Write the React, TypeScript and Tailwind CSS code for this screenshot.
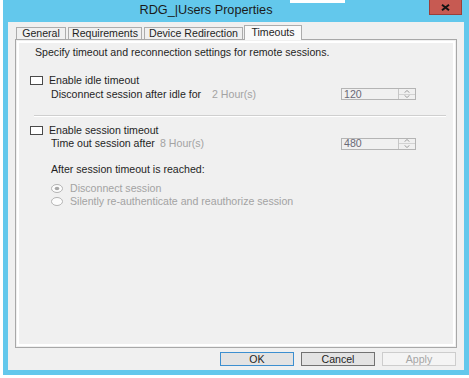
import React from 'react'

const font = { fontFamily: '"Liberation Sans", Arial, sans-serif' }

const Spin = ({ value }: { value: string }) => (
    <div className="flex h-[12px] w-[75px] border border-[#b4b4b4] bg-[#f0f0f0]">
        <div className="flex flex-1 items-center pl-[2px] text-[10.6px] leading-none text-[#6a6a76]">{value}</div>
        <div className="flex w-[17px] flex-col border-l border-[#c6c6c6]">
            <div className="flex flex-1 items-center justify-center border-b border-[#d2d2d2]">
                <svg width="6" height="3" viewBox="0 0 6 3"><path d="M0.5 2.7 L3 0.5 L5.5 2.7" fill="none" stroke="#a0a0a0" strokeWidth="1" /></svg>
            </div>
            <div className="flex flex-1 items-center justify-center">
                <svg width="6" height="3" viewBox="0 0 6 3"><path d="M0.5 0.3 L3 2.5 L5.5 0.3" fill="none" stroke="#a0a0a0" strokeWidth="1" /></svg>
            </div>
        </div>
    </div>
)

const Check = () => <div className="h-[9px] w-[13px] border border-[#4a4a4a] bg-white" />

const Radio = ({ on }: { on?: boolean }) => (
    <svg width="12" height="9" viewBox="0 0 12 9">
        <ellipse cx="6" cy="4.5" rx="5.5" ry="4" fill="#fcfcfc" stroke="#b3b3b3" strokeWidth="1" />
        {on && <ellipse cx="6" cy="4.5" rx="2.3" ry="1.7" fill="#a8a8a8" />}
    </svg>
)

const tabs = [
    { label: 'General', w: 'w-[50px]' },
    { label: 'Requirements', w: 'w-[74px]' },
    { label: 'Device Redirection', w: 'w-[99px]' },
]

const App = () => {
    return (
        <div className="relative h-[378px] w-[469px] overflow-hidden bg-white text-[#1f1f1f]" style={font}>
            <div className="ml-[3px] flex h-[375px] w-[466px] flex-col bg-[#63c8ec]">
                {/* title bar */}
                <div className="flex h-[22px] items-start">
                    <div className="flex h-[22px] flex-1 items-center justify-center pr-[20px] text-[12.7px] text-[#1b1b1b]">
                        RDG_|Users Properties
                    </div>
                    <div className="mr-[7px] flex h-[15px] w-[33px] items-center justify-center border border-t-0 border-[#9a3f3a] bg-[#c75a52]">
                        <svg width="9" height="7" viewBox="0 0 9 7">
                            <path d="M1 0.8 L8 6.2 M8 0.8 L1 6.2" stroke="#141414" strokeWidth="2" />
                        </svg>
                    </div>
                </div>

                {/* client */}
                <div className="mx-[5px] flex h-[348px] flex-col bg-[#f0f0f0] px-[7px] pt-[3px]">
                    <div className="relative z-10 flex h-[14px] items-end pl-[1px] text-[10.6px]">
                        {tabs.map((t) => (
                            <div
                                key={t.label}
                                className={`${t.w} mr-[2px] flex h-[12px] items-center justify-center border border-b-0 border-[#acacac] bg-[#f0f0f0] leading-none`}
                            >
                                {t.label}
                            </div>
                        ))}
                        <div className="-ml-[1px] -mb-px flex h-[15px] w-[58px] items-center justify-center border border-b-0 border-[#acacac] bg-[#fafafa] pb-[1px] leading-none">
                            Timeouts
                        </div>
                    </div>

                    <div className="h-[309px] border border-[#a8a8a8] bg-[#f0f0f0] pl-[14px] pr-[10px] text-[10.6px] leading-none shadow-[inset_0_0_0_1px_#f0f0f0,inset_0_0_0_3px_#ffffff]">
                        <div className="mt-[5px] flex h-[14px] items-center pl-[5px]">
                            Specify timeout and reconnection settings for remote sessions.
                        </div>

                        <div className="mt-[14px] flex h-[14px] items-center gap-[6px]">
                            <Check />
                            <span>Enable idle timeout</span>
                        </div>
                        <div className="flex h-[14px] items-center pl-[21px]">
                            <span className="w-[161px]">Disconnect session after idle for</span>
                            <span className="text-[#a3a3a3]">2 Hour(s)</span>
                            <div className="ml-auto mr-[30px]"><Spin value="120" /></div>
                        </div>

                        <div className="ml-[4px] mt-[14px] h-[2px] border-t border-[#cfcfcf] bg-white" />

                        <div className="mt-[6px] flex h-[14px] items-center gap-[6px]">
                            <Check />
                            <span>Enable session timeout</span>
                        </div>
                        <div className="flex h-[13px] items-center pl-[21px]">
                            <span className="w-[109px]">Time out session after</span>
                            <span className="text-[#a3a3a3]">8 Hour(s)</span>
                            <div className="ml-auto mr-[30px]"><Spin value="480" /></div>
                        </div>

                        <div className="mt-[12px] flex h-[14px] items-center pl-[21px]">
                            After session timeout is reached:
                        </div>
                        <div className="mt-[5px] flex h-[14px] items-center gap-[7px] pl-[21px] text-[#a3a3a3]">
                            <Radio on />
                            <span>Disconnect session</span>
                        </div>
                        <div className="flex h-[13px] items-center gap-[7px] pl-[21px] text-[#a3a3a3]">
                            <Radio />
                            <span>Silently re-authenticate and reauthorize session</span>
                        </div>
                    </div>

                    <div className="mt-[4px] flex h-[14px] justify-end gap-[7px] pr-[1px] text-[10.6px] leading-none">
                        <button className="flex w-[74px] items-center justify-center border border-[#3c8fd0] bg-[#e3e3e3]">OK</button>
                        <button className="flex w-[74px] items-center justify-center border border-[#727272] bg-[#e3e3e3]">Cancel</button>
                        <button className="flex w-[74px] items-center justify-center border border-[#cdcdcd] bg-[#f4f4f4] text-[#a6a6a6]">Apply</button>
                    </div>
                </div>
            </div>
            {/* white glitch strip on top edge */}
            <div className="absolute left-[290px] top-0 h-[3px] w-[55px] bg-white" />
        </div>
    )
}

export default App
